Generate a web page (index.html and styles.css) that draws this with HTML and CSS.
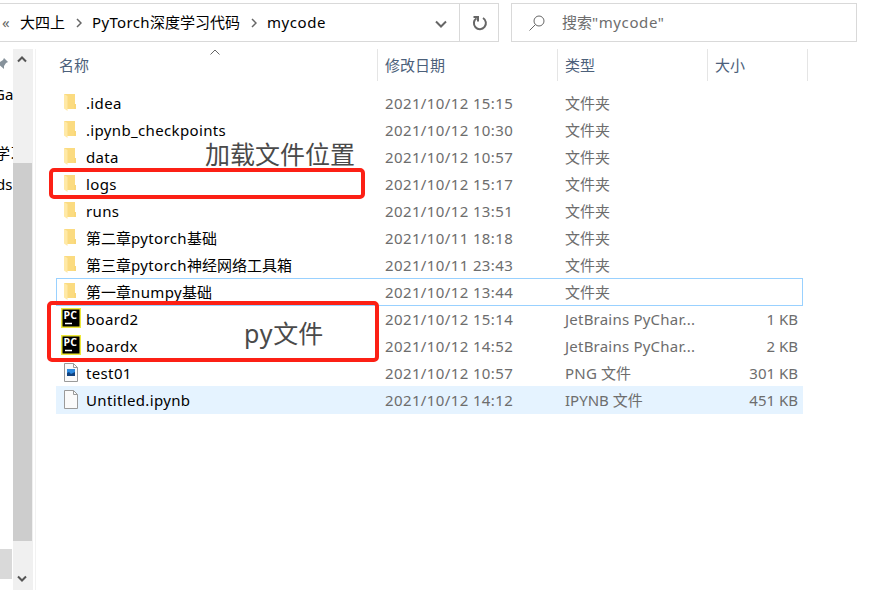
FILE: index.html
```html
<!DOCTYPE html>
<html lang="zh-CN">
<head>
    <meta charset="UTF-8">
    <title>mycode</title>
    <link rel="stylesheet" href="styles.css">
</head>
<body>

    <!-- shared icons -->
    <svg class="symbols" width="0" height="0">
        <symbol id="folder" viewBox="0 0 14 18">
            <path d="M1 1h11v15H4z" fill="#fbdb80"/>
            <path d="M11 11h2v5h-2z" fill="#f9d779"/>
            <path d="M1 1l3.500 2v15L1 15.500z" fill="#ffe9a6"/>
        </symbol>
        <symbol id="pycharm" viewBox="0 0 20 20">
            <rect x=".75" y=".75" width="18.500" height="18.500" fill="#000" stroke="#eee838" stroke-width="1.500"/>
            <text x="2.600" y="11" class="pc-text">PC</text>
            <path d="M4 15.500h7" stroke="#fff" stroke-width="1.500"/>
        </symbol>
        <symbol id="image" viewBox="0 0 16 19">
            <path d="M1.500.5h9l4 4v14h-13z" fill="#fafafa" stroke="#9a9a9a"/>
            <path d="M10.500.5v4h4" fill="none" stroke="#9a9a9a"/>
            <path d="M4 6h8v7H4z" fill="#2d8ae0"/>
            <path d="M4 13v-3l2-1 2 2 4-2v4z" fill="#12427e"/>
        </symbol>
        <symbol id="file" viewBox="0 0 16 19">
            <path d="M1.500.5h9l4 4v14h-13z" fill="#fafafa" stroke="#9a9a9a"/>
            <path d="M10.500.5v4h4" fill="none" stroke="#9a9a9a"/>
        </symbol>
    </svg>

    <div class="toolbar">
        <div class="address">
            <span class="back">«</span>
            <span class="crumb">大四上</span>
            <svg class="sep" width="6" height="10" viewBox="0 0 6 10"><path d="M1 1l4 4-4 4"/></svg>
            <span class="crumb"><span class="en">PyTorch</span>深度学习代码</span>
            <svg class="sep" width="6" height="10" viewBox="0 0 6 10"><path d="M1 1l4 4-4 4"/></svg>
            <span class="crumb en last">mycode</span>
            <svg class="drop" width="12" height="8" viewBox="0 0 12 8"><path d="M1 1.500l5 5 5-5"/></svg>
        </div>
        <div class="refresh">
            <svg width="16" height="16" viewBox="0 0 16 16"><path d="M11 3a6 6 0 1 1-6.500.2"/><path d="M1.500 2H6v4.500"/></svg>
        </div>
        <div class="search">
            <svg width="16" height="16" viewBox="0 0 16 16"><circle cx="10" cy="6" r="5"/><path d="M6.500 9.500l-6 6"/></svg>
            <span class="crumb">搜索<span class="en last">"mycode"</span></span>
        </div>
    </div>

    <div class="main">
        <div class="nav">
            <svg class="pin" width="8" height="14" viewBox="0 0 8 14"><path d="M4 1l4 4-2 1-2 3v3L0 8.500V5l3-2z"/></svg>
            <span class="nav-item ga">Ga</span>
            <span class="nav-item xue">学习</span>
            <span class="nav-item ds">ds</span>
            <div class="hbar"></div>
        </div>
        <div class="scrollbar">
            <svg width="10" height="8" viewBox="0 0 10 8"><path d="M1 6.500l4-4 4 4"/></svg>
            <div class="thumb"></div>
            <svg width="10" height="8" viewBox="0 0 10 8"><path d="M1 1.500l4 4 4-4"/></svg>
        </div>
        <div class="content">
            <div class="header">
                <div>名称<svg class="sort" width="10" height="6" viewBox="0 0 10 6"><path d="M.5 5.500L5 1l4.500 4.500"/></svg></div>
                <div>修改日期</div>
                <div>类型</div>
                <div>大小</div>
            </div>
            <div class="list">
                <div class="row"><svg class="icon"><use href="#folder"/></svg><div class="name"><span class="en">.idea</span></div><div class="date">2021/10/12 15:15</div><div class="type">文件夹</div><div class="size"></div></div>
                <div class="row"><svg class="icon"><use href="#folder"/></svg><div class="name"><span class="en">.ipynb_checkpoints</span></div><div class="date">2021/10/12 10:30</div><div class="type">文件夹</div><div class="size"></div></div>
                <div class="row"><svg class="icon"><use href="#folder"/></svg><div class="name"><span class="en">data</span></div><div class="date">2021/10/12 10:57</div><div class="type">文件夹</div><div class="size"></div></div>
                <div class="row"><svg class="icon"><use href="#folder"/></svg><div class="name"><span class="en">logs</span></div><div class="date">2021/10/12 15:17</div><div class="type">文件夹</div><div class="size"></div></div>
                <div class="row"><svg class="icon"><use href="#folder"/></svg><div class="name"><span class="en">runs</span></div><div class="date">2021/10/12 13:51</div><div class="type">文件夹</div><div class="size"></div></div>
                <div class="row"><svg class="icon"><use href="#folder"/></svg><div class="name">第二章<span class="en">pytorch</span>基础</div><div class="date">2021/10/11 18:18</div><div class="type">文件夹</div><div class="size"></div></div>
                <div class="row"><svg class="icon"><use href="#folder"/></svg><div class="name">第三章<span class="en">pytorch</span>神经网络工具箱</div><div class="date">2021/10/11 23:43</div><div class="type">文件夹</div><div class="size"></div></div>
                <div class="row focused"><svg class="icon"><use href="#folder"/></svg><div class="name">第一章<span class="en">numpy</span>基础</div><div class="date">2021/10/12 13:44</div><div class="type">文件夹</div><div class="size"></div></div>
                <div class="row"><svg class="icon pc"><use href="#pycharm"/></svg><div class="name"><span class="en">board2</span></div><div class="date">2021/10/12 15:14</div><div class="type"><span class="en">JetBrains PyChar...</span></div><div class="size">1 KB</div></div>
                <div class="row"><svg class="icon pc"><use href="#pycharm"/></svg><div class="name"><span class="en">boardx</span></div><div class="date">2021/10/12 14:52</div><div class="type"><span class="en">JetBrains PyChar...</span></div><div class="size">2 KB</div></div>
                <div class="row"><svg class="icon doc"><use href="#image"/></svg><div class="name"><span class="en">test01</span></div><div class="date">2021/10/12 10:57</div><div class="type"><span class="en">PNG</span> 文件</div><div class="size">301 KB</div></div>
                <div class="row hover"><svg class="icon doc"><use href="#file"/></svg><div class="name"><span class="en">Untitled.ipynb</span></div><div class="date">2021/10/12 14:12</div><div class="type">IPYNB 文件</div><div class="size">451 KB</div></div>
            </div>
        </div>
    </div>

    <!-- annotations -->
    <div class="mark mark-logs"></div>
    <div class="mark mark-py"></div>
    <div class="note note-logs">加载文件位置</div>
    <div class="note note-py"><span class="note-en">py</span>文件</div>

</body>
</html>
```
FILE: styles.css
```css
* {
    box-sizing: border-box;
}
body {
    margin: 0;
    height: 590px;
    position: relative;
    overflow: hidden;
    background: #fff;
    color: #000;
    font: 15px/20px "Noto Sans", "Noto Sans CJK SC", sans-serif;
}
svg {
    flex: none;
    fill: none;
    stroke: #666;
}
.symbols {
    position: absolute;
    stroke: none;
}
.en {
    letter-spacing: 0.35px;
}
.last {
    letter-spacing: 0.6px;
}
.toolbar {
    display: flex;
    height: 42px;
    padding: 3px 12px 0 0;
}
.address {
    width: 460px;
    display: flex;
    align-items: center;
    border: 1px solid #d9d9d9;
    border-left: none;
    white-space: nowrap;
}
.crumb {
    padding-bottom: 2px;
}
.back {
    width: 20px;
    padding: 0 0 2px 2px;
    color: #666;
}
.sep {
    margin: 0 10px 0 11px;
    stroke-width: 1.5;
}
.drop {
    margin: 3px 12px 0 auto;
    stroke-width: 2;
}
.refresh {
    width: 39px;
    display: flex;
    align-items: center;
    justify-content: center;
    padding-left: 2px;
    border: 1px solid #d9d9d9;
    border-left: none;
}
.refresh svg {
    stroke-width: 2;
}
.search {
    flex: 1;
    display: flex;
    align-items: center;
    gap: 17px;
    margin-left: 12px;
    padding-left: 17px;
    border: 1px solid #d9d9d9;
    color: #6d6d6d;
}
.main {
    display: flex;
    height: 548px;
    padding-top: 7px;
}
.nav {
    width: 13px;
    display: flex;
    flex-direction: column;
    overflow: hidden;
}
.pin {
    margin: 8px 0 13px;
    fill: #87929b;
    stroke: none;
}
.nav-item {
    height: 20px;
    white-space: nowrap;
}
.ga {
    margin: 0 0 39px -6px;
}
.xue {
    margin: 0 0 11px -5px;
}
.ds {
    margin-left: -4px;
}
.hbar {
    width: 12px;
    height: 30px;
    margin: auto 0 11px;
    background: #d9d9d9;
}
.scrollbar {
    width: 20px;
    display: flex;
    flex-direction: column;
    background: #f0f0f0;
}
.scrollbar svg {
    margin: 6px 0 6px 4px;
    stroke: #555;
    stroke-width: 2;
}
.thumb {
    width: 19px;
    height: 378px;
    margin: 94px 0 28px;
    background: #cdcdcd;
}
.content {
    flex: 1;
    margin-left: 2px;
    border-left: 1px solid #f2f2f2;
}
.header {
    display: grid;
    grid-template-columns: 342px 180px 150px 100px;
    height: 32px;
    color: #4c607a;
}
.header div {
    padding: 6px 0 0 7px;
    border-right: 1px solid #e5e5e5;
}
.header div:first-child {
    padding-left: 23px;
    position: relative;
}
.sort {
    position: absolute;
    left: 174px;
    top: 0;
}
.list {
    width: 747px;
    margin: 8px 0 0 20px;
}
.row {
    display: grid;
    grid-template-columns: 30px 299px 180px 1fr 70px;
    align-items: center;
    height: 28px;
    margin-bottom: -1px;
    padding: 0 5px 1px 0;
    color: #6d6d6d;
    white-space: nowrap;
}
.focused {
    box-shadow: inset 0 0 0 1px #99d1ff;
}
.hover {
    background: #e5f3ff;
}
.icon {
    width: 14px;
    height: 18px;
    margin: -1px 0 0 7px;
    stroke: none;
}
.pc {
    width: 20px;
    height: 20px;
    margin: -1px 0 0 5px;
}
.pc-text {
    font: bold 10.5px "Open Sans", sans-serif;
    fill: #fff;
}
.doc {
    width: 16px;
    height: 19px;
    margin: 0 0 0 7px;
}
.name {
    color: #000;
}
.date {
    letter-spacing: 0.38px;
}
.type .en {
    letter-spacing: 0.22px;
}
.size {
    text-align: right;
}
.mark {
    position: absolute;
    border: 4px solid #fc2015;
    border-radius: 5px;
}
.mark-logs {
    left: 49px;
    top: 168px;
    width: 316px;
    height: 31px;
}
.mark-py {
    left: 47px;
    top: 301px;
    width: 332px;
    height: 61px;
}
.note {
    position: absolute;
    color: #4a4a4a;
    font-size: 25px;
    line-height: 30px;
    white-space: nowrap;
}
.note-en {
    letter-spacing: 0.8px;
}
.note-logs {
    left: 205px;
    top: 139px;
}
.note-py {
    left: 244px;
    top: 318px;
}
```
